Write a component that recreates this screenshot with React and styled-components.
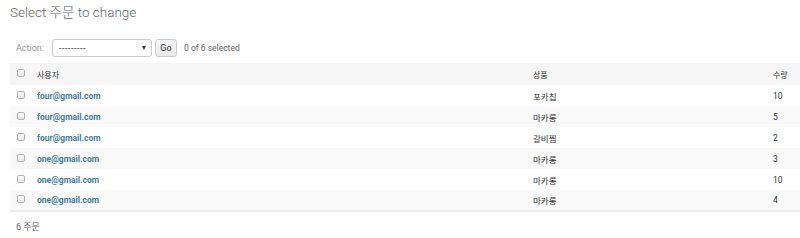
import React from 'react';
import styled, { createGlobalStyle } from 'styled-components';

const GlobalStyle = createGlobalStyle`
  html, body {
    margin: 0;
    padding: 0;
    background: #fff;
    overflow: hidden;
  }
  body {
    font-family: Roboto, "Noto Sans CJK KR", sans-serif;
    color: #333;
  }
`;

const Page = styled.div`
  padding: 0 0 0 10px;
  width: 790px;
`;

const Title = styled.h1`
  margin: 0;
  padding-top: 2px;
  height: 30px;
  font-size: 13.5px;
  font-weight: 300;
  color: #666;
  line-height: 20px;
`;

const Actions = styled.div`
  display: flex;
  align-items: center;
  height: 31px;
  padding-left: 6px;
  font-size: 9px;
  color: #999;
`;

const ActionLabel = styled.span`
  margin-right: 8px;
`;

const SelectBox = styled.div`
  box-sizing: border-box;
  width: 100px;
  height: 18px;
  border: 1px solid #ccc;
  border-radius: 3px;
  background: #fff;
  display: flex;
  align-items: center;
  padding-left: 6px;
  color: #333;
  font-size: 9px;
  letter-spacing: 0.5px;
`;

const Caret = styled.span`
  margin-left: auto;
  margin-right: 5px;
  width: 0;
  height: 0;
  border-left: 2.5px solid transparent;
  border-right: 2.5px solid transparent;
  border-top: 4px solid #333;
`;

const GoButton = styled.button`
  box-sizing: border-box;
  margin-left: 3px;
  height: 18px;
  width: 22px;
  padding: 0;
  border: 1px solid #ccc;
  border-radius: 3px;
  background: linear-gradient(#f8f8f8, #e8e8e8);
  color: #333;
  font-family: Roboto, sans-serif;
  font-size: 9px;
`;

const Counter = styled.span`
  margin-left: 7px;
  color: #666;
  font-size: 8.5px;
`;

const Table = styled.table`
  width: 790px;
  border-collapse: collapse;
  table-layout: fixed;
  font-size: 8.5px;
  border-bottom: 2px solid #eee;
`;

const HeadRow = styled.tr`
  background: #f6f6f6;
  height: 22px;
`;

const Row = styled.tr`
  height: 21px;
  background: ${p => (p.$odd ? '#f9f9f9' : '#fff')};
`;

const Cell = styled.td`
  padding: 0 0 0 7px;
  vertical-align: middle;
  color: #333;
  white-space: nowrap;
`;

const HeadCell = styled.th`
  padding: 0 0 0 7px;
  text-align: left;
  font-weight: 400;
  color: #333;
  font-size: 8px;
  vertical-align: middle;
`;

const Check = styled.span`
  display: block;
  box-sizing: border-box;
  width: 8px;
  height: 8px;
  border: 1px solid #b5b5b5;
  border-radius: 2px;
  background: linear-gradient(#fdfdfd, #e6e6e6);
  margin-top: -2px;
`;

const UserLink = styled.a`
  color: #447e9b;
  font-weight: 700;
  text-decoration: none;
`;

const Footer = styled.p`
  margin: 0;
  padding: 8px 0 0 6px;
  font-size: 9px;
  color: #666;
`;

const rows = [
  { user: 'four@gmail.com', product: '포카칩', qty: 10 },
  { user: 'four@gmail.com', product: '마카롱', qty: 5 },
  { user: 'four@gmail.com', product: '갈비찜', qty: 2 },
  { user: 'one@gmail.com', product: '마카롱', qty: 3 },
  { user: 'one@gmail.com', product: '마카롱', qty: 10 },
  { user: 'one@gmail.com', product: '마카롱', qty: 4 },
];

export default function App() {
  return (
    <Page>
      <GlobalStyle />
      <Title>Select 주문 to change</Title>
      <Actions>
        <ActionLabel>Action:</ActionLabel>
        <SelectBox>
          ---------
          <Caret />
        </SelectBox>
        <GoButton>Go</GoButton>
        <Counter>0 of 6 selected</Counter>
      </Actions>
      <Table>
        <colgroup>
          <col style={{ width: 20 }} />
          <col style={{ width: 496 }} />
          <col style={{ width: 240 }} />
          <col />
        </colgroup>
        <thead>
          <HeadRow>
            <HeadCell><Check /></HeadCell>
            <HeadCell>사용자</HeadCell>
            <HeadCell>상품</HeadCell>
            <HeadCell>수량</HeadCell>
          </HeadRow>
        </thead>
        <tbody>
          {rows.map((r, i) => (
            <Row key={i} $odd={i % 2 === 1}>
              <Cell><Check /></Cell>
              <Cell><UserLink href="#">{r.user}</UserLink></Cell>
              <Cell>{r.product}</Cell>
              <Cell>{r.qty}</Cell>
            </Row>
          ))}
        </tbody>
      </Table>
      <Footer>6 주문</Footer>
    </Page>
  );
}
